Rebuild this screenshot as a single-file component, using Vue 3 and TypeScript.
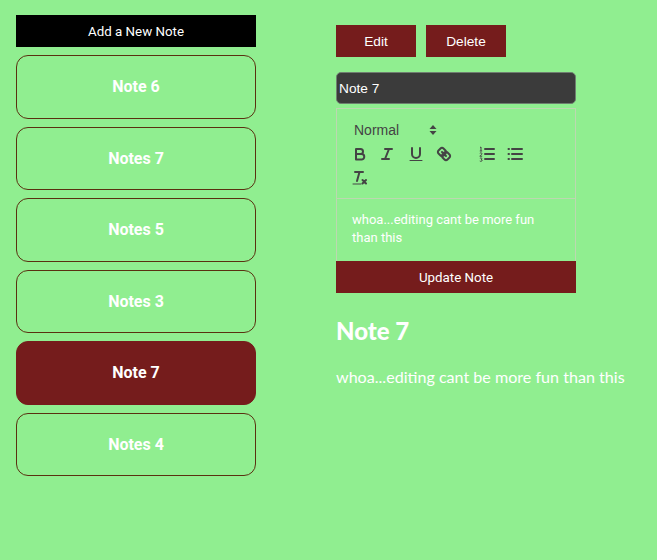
<script setup lang="ts">
interface Note {
  title: string
  active?: boolean
}

const notes: Note[] = [
  { title: 'Note 6' },
  { title: 'Notes 7' },
  { title: 'Notes 5' },
  { title: 'Notes 3' },
  { title: 'Note 7', active: true },
  { title: 'Notes 4' },
]
</script>

<template>
  <div class="page">
    <aside class="sidebar">
      <button class="add">Add a New Note</button>
      <div v-for="(note, i) in notes" :key="i" class="note" :class="{ active: note.active }">
        {{ note.title }}
      </div>
    </aside>
    <main class="detail">
      <div class="actions">
        <button class="action">Edit</button>
        <button class="action">Delete</button>
      </div>
      <div class="title-input">Note 7</div>
      <div class="toolbar">
        <div class="picker">
          <span>Normal</span>
          <svg width="8" height="10" viewBox="0 0 8 10"><path d="M4 0 7.5 4H.5zM4 10 .5 6h7z" fill="#444" /></svg>
        </div>
        <div class="tools">
          <svg class="tool" viewBox="0 0 18 18"><path class="s" d="M5 4h4.500a2.500 2.500 0 0 1 0 5H5zM5 9h5.500a2.750 2.750 0 0 1 0 5.500H5z" /></svg>
          <svg class="tool" viewBox="0 0 18 18"><path class="s" d="M6 4h7M3 14h7M10 4 6 14" /></svg>
          <svg class="tool" viewBox="0 0 18 18"><path class="s" d="M5 3v6a4 4 0 0 0 8 0V3" /><path class="s thin" d="M3 15.500h12" /></svg>
          <svg class="tool" viewBox="0 0 18 18"><path class="s" d="M7 7 11 11M5.500 3.500l-2 2a2.100 2.100 0 0 0 0 3l2 2a2.100 2.100 0 0 0 3 0l2-2a2.100 2.100 0 0 0 0-3l-2-2a2.100 2.100 0 0 0-3 0zM9.500 7.500l-2 2a2.100 2.100 0 0 0 0 3l2 2a2.100 2.100 0 0 0 3 0l2-2a2.100 2.100 0 0 0 0-3l-2-2a2.100 2.100 0 0 0-3 0z" /></svg>
          <span class="spacer"></span>
          <svg class="tool" viewBox="0 0 18 18"><path class="s" d="M7 4h9M7 9h9M7 14h9" /><path class="t" d="M2 2.500 3 2v4M1.800 6h2.400M1.800 8.300c.8-.8 2.400-.4 2.200.6-.1.6-1.500 1.200-2.200 2.300h2.400M1.900 13.300c1-.6 2.300-.2 2.100.7-.1.4-.5.5-1 .6.6 0 1.200.3 1.100.9-.1.9-1.500 1.100-2.300.5" /></svg>
          <svg class="tool" viewBox="0 0 18 18"><path class="s" d="M6 4h10M6 9h10M6 14h10M2.500 4h.5M2.500 9h.5M2.500 14h.5" /></svg>
        </div>
        <div class="tools">
          <svg class="tool" viewBox="0 0 18 18"><path class="s" d="M4 3h8M8.500 3 6 12" /><path class="s thin" d="M2 15h8" /><path class="s" d="M11.500 11 15 14.500M15 11l-3.500 3.500" /></svg>
        </div>
      </div>
      <div class="editor">whoa...editing cant be more fun than this</div>
      <button class="update">Update Note</button>
      <h2 class="heading">Note 7</h2>
      <p class="body-text">whoa...editing cant be more fun than this</p>
    </main>
  </div>
</template>

<style>
html,
body {
  margin: 0;
  background: #90ee90;
}
</style>

<style scoped>
.page {
  display: flex;
  align-items: flex-start;
  width: 657px;
  height: 560px;
  box-sizing: border-box;
  overflow: hidden;
  background: #90ee90;
  color: #fff;
  font-family: Roboto, sans-serif;
}
.sidebar {
  display: flex;
  flex-direction: column;
  gap: 8px;
  width: 240px;
  margin: 15px 80px 0 16px;
}
button {
  display: block;
  border: 0;
  padding: 0;
  height: 32px;
  color: #fff;
  font-family: Roboto, sans-serif;
  font-size: 13.33px;
}
.add {
  width: 240px;
  background: #000;
}
.note {
  display: flex;
  align-items: center;
  justify-content: center;
  box-sizing: border-box;
  height: 63.5px;
  border: 1px solid #5a3010;
  border-radius: 12px;
  font-size: 16px;
  font-weight: 700;
}
.note.active {
  background: #751c1c;
  border-color: #751c1c;
}
.detail {
  width: 321px;
  padding-top: 25px;
}
.actions {
  display: flex;
  gap: 10px;
}
.action {
  width: 80px;
  background: #751c1c;
  font-family: Arial, 'Liberation Sans', sans-serif;
  font-size: 13.7px;
}
.title-input {
  display: flex;
  align-items: center;
  box-sizing: border-box;
  width: 240px;
  height: 32px;
  margin-top: 15px;
  padding-left: 2px;
  background: #3b3b3b;
  border: 1px solid #6f7f70;
  border-radius: 5px;
  font-family: Arial, 'Liberation Sans', sans-serif;
  font-size: 13.7px;
}
.toolbar {
  box-sizing: border-box;
  width: 240px;
  height: 90px;
  margin-top: 4px;
  padding: 9px 8px 0 14px;
  border: 1px solid #bcd8b0;
  border-bottom: 0;
}
.picker {
  display: flex;
  align-items: center;
  justify-content: space-between;
  width: 83px;
  height: 24px;
  margin-left: 3px;
  color: #444;
  font-family: Arial, 'Liberation Sans', sans-serif;
  font-size: 14px;
}
.tools {
  display: flex;
  gap: 10px;
  height: 24px;
  align-items: center;
}
.tool {
  flex: none;
  width: 18px;
  height: 18px;
}
.spacer {
  width: 5px;
}
.s {
  fill: none;
  stroke: #444;
  stroke-width: 2;
  stroke-linecap: round;
  stroke-linejoin: round;
}
.thin {
  stroke-width: 1;
}
.t {
  fill: none;
  stroke: #444;
  stroke-width: 1;
}
.editor {
  box-sizing: border-box;
  width: 240px;
  height: 63px;
  padding: 12px 15px;
  border: 1px solid #bcd8b0;
  border-bottom: 0;
  font-size: 13px;
  line-height: 18px;
}
.update {
  width: 240px;
  background: #751c1c;
}
.heading {
  margin: 23px 0 0;
  font-family: Lato, sans-serif;
  font-size: 24px;
  line-height: 29px;
  font-weight: 900;
}
.body-text {
  margin: 22px 0 0;
  font-family: Lato, sans-serif;
  font-size: 16.1px;
  line-height: 19px;
}
</style>
